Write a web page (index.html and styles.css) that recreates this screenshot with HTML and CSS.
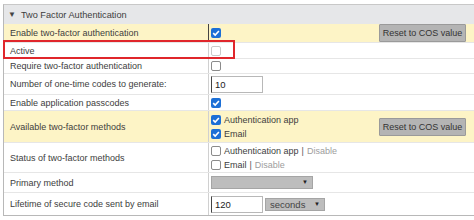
FILE: index.html
```html
<!DOCTYPE html>
<html lang="en">
<head>
  <meta charset="UTF-8">
  <title>Two Factor Authentication</title>
  <link rel="stylesheet" href="styles.css">
</head>
<body>
  <div class="panel">
    <div class="panel-head"><span class="arrow">&#9660;</span>Two Factor Authentication</div>
    <table class="prefs">
      <tr class="hl r1">
        <td class="lbl">Enable two-factor authentication</td>
        <td class="val"><span class="cb on"><svg viewBox="0 0 10 10"><path d="M2.2 5.1 4.2 7.1 7.9 3"/></svg></span></td>
        <td class="act"><button class="reset">Reset to COS value</button></td>
      </tr>
      <tr class="r2 marked">
        <td class="lbl">Active</td>
        <td class="val"><span class="cb off dis"></span></td>
        <td class="act"></td>
      </tr>
      <tr class="r3">
        <td class="lbl">Require two-factor authentication</td>
        <td class="val"><span class="cb off"></span></td>
        <td class="act"></td>
      </tr>
      <tr class="r4">
        <td class="lbl">Number of one-time codes to generate:</td>
        <td class="val"><span class="txt">10</span></td>
        <td class="act"></td>
      </tr>
      <tr class="r5">
        <td class="lbl">Enable application passcodes</td>
        <td class="val"><span class="cb on"><svg viewBox="0 0 10 10"><path d="M2.2 5.1 4.2 7.1 7.9 3"/></svg></span></td>
        <td class="act"></td>
      </tr>
      <tr class="hl r6">
        <td class="lbl">Available two-factor methods</td>
        <td class="val">
          <div class="opt"><span class="cb on"><svg viewBox="0 0 10 10"><path d="M2.2 5.1 4.2 7.1 7.9 3"/></svg></span>Authentication app</div>
          <div class="opt"><span class="cb on"><svg viewBox="0 0 10 10"><path d="M2.2 5.1 4.2 7.1 7.9 3"/></svg></span>Email</div>
        </td>
        <td class="act"><button class="reset">Reset to COS value</button></td>
      </tr>
      <tr class="r7">
        <td class="lbl">Status of two-factor methods</td>
        <td class="val">
          <div class="opt"><span class="cb off"></span>Authentication app <span class="sep">|</span> <span class="link">Disable</span></div>
          <div class="opt"><span class="cb off"></span>Email <span class="sep">|</span> <span class="link">Disable</span></div>
        </td>
        <td class="act"></td>
      </tr>
      <tr class="r8">
        <td class="lbl">Primary method</td>
        <td class="val"><span class="sel wide"><span class="caret">&#9660;</span></span></td>
        <td class="act"></td>
      </tr>
      <tr class="r9">
        <td class="lbl">Lifetime of secure code sent by email</td>
        <td class="val"><span class="txt">120</span><span class="sel unit">seconds<span class="caret">&#9660;</span></span></td>
        <td class="act"></td>
      </tr>
    </table>
  </div>
</body>
</html>
```

FILE: styles.css
```css
body {
  margin: 0;
  overflow: hidden;
  background: #fff;
  font-family: "Liberation Sans", Arial, sans-serif;
  font-size: 9px;
  color: #3d3d3d;
}

.panel {
  margin: 4px 0 0 3px;
  width: 471px;
  border-top: 1px solid #c8c8c8;
  border-left: 1px solid #b8b8b8;
  border-bottom: 1px solid #b8b8b8;
}

.panel-head {
  height: 19px;
  display: flex;
  align-items: center;
  padding-left: 4px;
  background: #e6e7e9;
  font-size: 9.2px;
  color: #3d3d3d;
}
.arrow {
  font-size: 8px;
  margin-right: 5px;
  color: #444;
}

.prefs {
  width: 100%;
  border-collapse: collapse;
}
.prefs td {
  padding: 0;
  border-bottom: 1px solid #e6e6e6;
  vertical-align: middle;
}
.prefs tr:last-child td {
  border-bottom: 0;
}
.hl td {
  background: #fdf4c6;
}
.lbl {
  width: 198px;
  padding-left: 6px !important;
}
.val {
  width: 168px;
  border-left: 1px solid #d0d0d0;
  padding-left: 2px !important;
}
.act {
  text-align: right;
  padding-right: 9px !important;
}

.r1 td { height: 18px; }
.r1 .val { border-left-color: #444; }
.r2 td { height: 15px; }
.r3 td { height: 14px; }
.r4 td { height: 20px; }
.r5 td { height: 15px; }
.r6 td { height: 31px; }
.r7 td { height: 29px; }
.r8 td { height: 19px; }
.r9 td { height: 22px; }

.marked .lbl {
  position: relative;
}
.marked .lbl::after {
  content: "";
  position: absolute;
  left: -1px;
  top: -3px;
  width: 228px;
  height: 15px;
  border: 2px solid #e0262b;
  pointer-events: none;
}

.cb {
  display: inline-block;
  box-sizing: border-box;
  width: 10px;
  height: 10px;
  border-radius: 2px;
  vertical-align: middle;
}
.cb.off {
  background: #fff;
  border: 1px solid #8b8b8b;
}
.cb.dis {
  border-color: #c9c9c9;
}
.cb.on {
  background: #1c6fd6;
}
.cb svg {
  display: block;
  width: 10px;
  height: 10px;
  fill: none;
  stroke: #fff;
  stroke-width: 1.6;
}

.opt {
  display: flex;
  align-items: center;
  gap: 3px;
  height: 14px;
}
.sep {
  color: #555;
}
.link {
  color: #9d9d9d;
}

.txt {
  display: inline-flex;
  align-items: center;
  box-sizing: border-box;
  width: 52px;
  height: 17px;
  padding-left: 3px;
  border: 1px solid #b8b8b8;
  border-left-color: #444;
  background: #fff;
  color: #222;
  font-size: 9.5px;
  vertical-align: middle;
}

.sel {
  display: inline-flex;
  align-items: center;
  box-sizing: border-box;
  height: 13px;
  position: relative;
  background: #bdbdbd;
  border: 1px solid #a5a5a5;
  vertical-align: middle;
  color: #444;
}
.sel.wide {
  width: 102px;
}
.sel.unit {
  width: 60px;
  margin-left: 2px;
  padding-left: 4px;
  font-size: 9.5px;
}
.caret {
  position: absolute;
  right: 4px;
  top: 2px;
  font-size: 6px;
  color: #222;
}

.reset {
  width: 87px;
  height: 18px;
  padding: 0;
  background: #b4b4b4;
  border: 1px solid #9a9a9a;
  border-radius: 1px;
  font-family: "Liberation Sans", Arial, sans-serif;
  font-size: 9px;
  color: #333;
  vertical-align: middle;
}
```
